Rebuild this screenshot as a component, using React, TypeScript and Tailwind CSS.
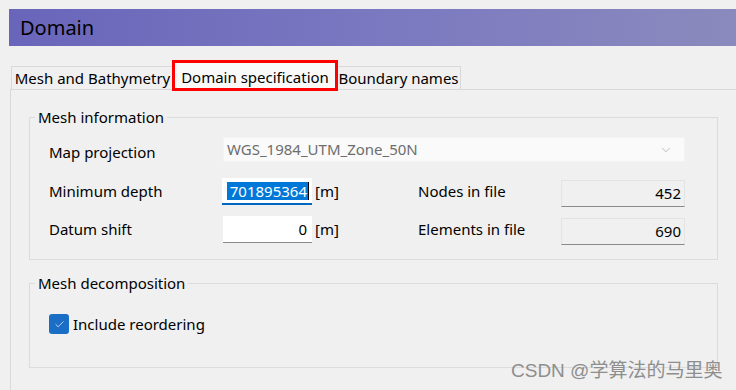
import { Check, ChevronDown } from 'lucide-react'

const font = { fontFamily: '"Noto Sans", "Open Sans", sans-serif' }

function Tab({ label, width, selected }: { label: string; width: string; selected?: boolean }) {
  if (selected) {
    return (
      <div className={`relative flex h-[27px] ${width} items-center justify-center bg-[#f9f9f9] -mb-px z-10`}>
        <span className="text-[15px] leading-[20px] text-black">{label}</span>
        <div className="absolute -inset-x-[2px] -top-[3px] -bottom-[1px] border-[3px] border-[#ff0000]" />
      </div>
    )
  }
  return (
    <div className={`flex h-[23px] ${width} items-center justify-center border border-b-0 border-[#d9d9d9] bg-[#f0f0f0]`}>
      <span className="text-[15px] leading-[20px] text-black">{label}</span>
    </div>
  )
}

function GroupBox({ title, className, children }: { title: string; className: string; children: React.ReactNode }) {
  return (
    <div className={`relative border border-[#dcdcdc] ${className}`}>
      <span className="absolute -top-[11px] left-[5px] bg-[#f0f0f0] px-[3px] text-[15px] leading-[20px] text-black">
        {title}
      </span>
      {children}
    </div>
  )
}

function ReadBox({ value }: { value: string }) {
  return (
    <div className="flex h-[27px] w-[124px] items-center justify-end border border-[#e3e3e3] border-b-[#8a8a8a] bg-[#f0f0f0] pr-[3px] text-[15px] text-black">
      {value}
    </div>
  )
}

export default function App() {
  return (
    <div className="relative h-[390px] w-[736px] overflow-hidden bg-[#f0f0f0] text-black" style={font}>
      {/* title bar */}
      <div className="ml-[9px] mt-[9px] flex h-[37px] items-center bg-gradient-to-r from-[#6965ba] via-[#7a78c0] to-[#8b8abd] pl-[11px]">
        <span className="text-[20px] leading-[26px] text-black">Domain</span>
      </div>

      {/* tabs */}
      <div className="mt-[17px] ml-[11px] flex items-end">
        <Tab label="Mesh and Bathymetry" width="w-[163px]" />
        <Tab label="Domain specification" width="w-[162px]" selected />
        <Tab label="Boundary names" width="w-[125px]" />
      </div>

      {/* tab pane */}
      <div className="ml-[10px] h-[310px] border-l border-t border-[#d9d9d9] pt-[27px] pl-[18px]">
        <GroupBox title="Mesh information" className="h-[143px] w-[689px] pl-[19px] pt-[19px]">
          <div className="flex h-[25px] items-center">
            <span className="w-[174px] pt-[5px] text-[15px]">Map projection</span>
            <div className="flex h-[25px] w-[462px] items-center justify-between border border-[#f3f3f3] bg-[#fafafa] pl-[3px] pr-[11px]">
              <span className="text-[15px] text-[#6d6d6d]">WGS_1984_UTM_Zone_50N</span>
              <ChevronDown className="h-[14px] w-[14px] text-[#a8a8a8]" strokeWidth={1.3} />
            </div>
          </div>

          <div className="mt-[16px] flex h-[29px] items-start">
            <span className="flex h-[27px] w-[173px] items-center text-[15px]">Minimum depth</span>
            <div className="flex h-[27px] w-[90px] items-center justify-end border-b-2 border-[#0067c0] bg-white pr-[3px]">
              <span className="whitespace-nowrap bg-[#0078d7] pl-[3px] pr-[1px] text-[15px] leading-[18px] text-white">
                701895364
              </span>
              <span className="h-[18px] w-px bg-black" />
            </div>
            <span className="flex h-[27px] w-[106px] items-center pl-[3px] text-[15px]">[m]</span>
            <span className="flex h-[27px] w-[143px] items-center text-[15px]">Nodes in file</span>
            <div className="mt-[2px]">
              <ReadBox value="452" />
            </div>
          </div>

          <div className="mt-[9px] flex h-[29px] items-start">
            <span className="flex h-[27px] w-[174px] items-center text-[15px]">Datum shift</span>
            <div className="flex h-[27px] w-[89px] items-center justify-end border-b border-[#8a8a8a] bg-white pr-[5px] text-[15px]">
              0
            </div>
            <span className="flex h-[27px] w-[106px] items-center pl-[3px] text-[15px]">[m]</span>
            <span className="flex h-[27px] w-[143px] items-center text-[15px]">Elements in file</span>
            <div className="mt-[2px]">
              <ReadBox value="690" />
            </div>
          </div>
        </GroupBox>

        <GroupBox title="Mesh decomposition" className="mt-[23px] h-[85px] w-[689px] pl-[19px] pt-[30px]">
          <div className="flex items-center gap-[4px]">
            <div className="flex h-[20px] w-[20px] items-center justify-center rounded-[3px] bg-[#1b6ec6]">
              <Check className="h-[11px] w-[11px] text-white" strokeWidth={1.5} />
            </div>
            <span className="text-[15px] leading-[20px]">Include reordering</span>
          </div>
        </GroupBox>
      </div>

      {/* watermark */}
      <span
        className="absolute left-[511px] top-[358px] text-[19px] leading-[26px] text-[#8e8e8e]"
        style={{ fontFamily: '"Liberation Sans", "Noto Sans CJK SC", sans-serif' }}
      >
        CSDN @学算法的马里奥
      </span>
    </div>
  )
}
